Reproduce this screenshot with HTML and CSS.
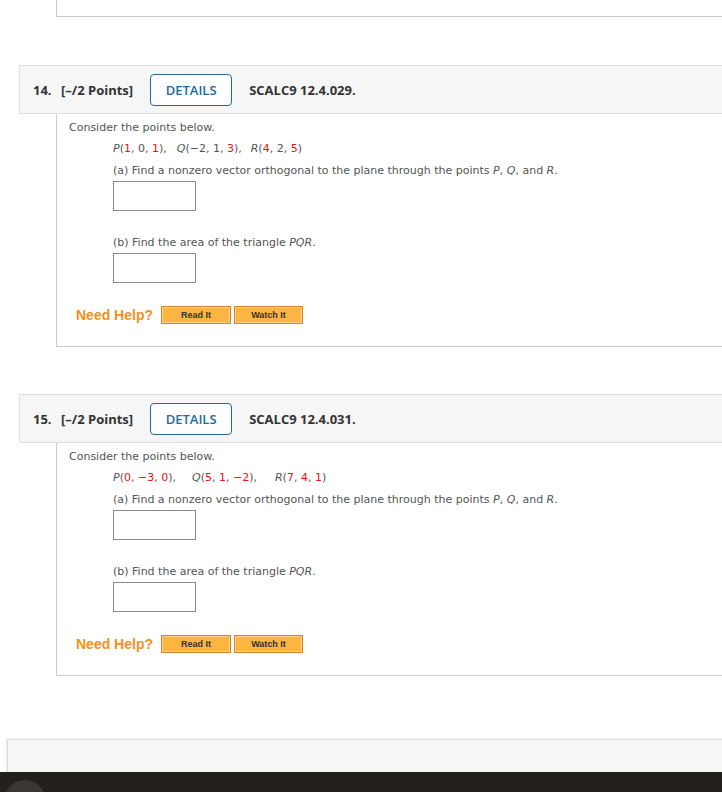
FILE: index.html
```html
<!DOCTYPE html>
<html>
<head>
<meta charset="utf-8">
<link rel="stylesheet" href="styles.css">
</head>
<body>
<div class="page">
  <div class="prev-body"></div>

  <div class="question">
    <div class="q-head">
      <span class="q-num">14.</span>
      <span class="q-points">[–/2 Points]</span>
      <span class="details-btn">DETAILS</span>
      <span class="q-ref">SCALC9 12.4.029.</span>
    </div>
    <div class="q-body">
      <p class="line">Consider the points below.</p>
      <p class="line indent"><span class="pt"><i>P</i>(<span class="red">1</span>, 0, <span class="red">1</span>),</span><span class="pt g1"><i>Q</i>(−2, 1, <span class="red">3</span>),</span><span class="pt g2"><i>R</i>(<span class="red">4</span>, 2, <span class="red">5</span>)</span></p>
      <p class="line indent part">(a) Find a nonzero vector orthogonal to the plane through the points <i>P</i>, <i>Q</i>, and <i>R</i>.</p>
      <div class="answer indent"></div>
      <p class="line indent part-b">(b) Find the area of the triangle <i>PQR</i>.</p>
      <div class="answer indent"></div>
      <div class="help-row">
        <span class="need-help">Need Help?</span>
        <span class="help-btn read">Read It</span>
        <span class="help-btn watch">Watch It</span>
      </div>
    </div>
  </div>

  <div class="question second">
    <div class="q-head">
      <span class="q-num">15.</span>
      <span class="q-points">[–/2 Points]</span>
      <span class="details-btn">DETAILS</span>
      <span class="q-ref">SCALC9 12.4.031.</span>
    </div>
    <div class="q-body">
      <p class="line">Consider the points below.</p>
      <p class="line indent"><span class="pt"><i>P</i>(<span class="red">0</span>, <span class="red">−3</span>, <span class="red">0</span>),</span><span class="pt g3"><i>Q</i>(<span class="red">5</span>, <span class="red">1</span>, <span class="red">−2</span>),</span><span class="pt g4"><i>R</i>(<span class="red">7</span>, <span class="red">4</span>, <span class="red">1</span>)</span></p>
      <p class="line indent part">(a) Find a nonzero vector orthogonal to the plane through the points <i>P</i>, <i>Q</i>, and <i>R</i>.</p>
      <div class="answer indent"></div>
      <p class="line indent part-b">(b) Find the area of the triangle <i>PQR</i>.</p>
      <div class="answer indent"></div>
      <div class="help-row">
        <span class="need-help">Need Help?</span>
        <span class="help-btn read">Read It</span>
        <span class="help-btn watch">Watch It</span>
      </div>
    </div>
  </div>

  <div class="next-head"></div>
</div>

<div class="footer-bar">
  <span class="footer-circle"></span>
</div>
</body>
</html>
```

FILE: styles.css
```css
html, body {
  margin: 0;
  padding: 0;
  overflow: hidden;
  background: #ffffff;
}

.page {
  width: 722px;
  height: 792px;
  overflow: hidden;
}

.prev-body {
  margin-left: 56px;
  margin-right: -20px;
  height: 17px;
  border-left: 1px solid #cccccc;
  border-bottom: 1px solid #cccccc;
  box-sizing: border-box;
}

.question {
  margin-top: 48px;
  margin-left: 19px;
  margin-right: -30px;
}

.question.second {
  margin-top: 47px;
}

.q-head {
  display: flex;
  align-items: center;
  height: 49px;
  box-sizing: border-box;
  background: #f6f6f6;
  border: 1px solid #dedede;
  padding-left: 13px;
  font-family: "Open Sans", "Liberation Sans", sans-serif;
  font-size: 13px;
  font-weight: 700;
  color: #333333;
}

.q-num {
  width: 28px;
}

.details-btn {
  display: flex;
  align-items: center;
  justify-content: center;
  box-sizing: border-box;
  width: 82px;
  height: 32px;
  margin-left: 17px;
  margin-right: 17px;
  border: 1px solid #1f6b9c;
  border-radius: 4px;
  background: #ffffff;
  color: #1d6a9c;
  font-weight: 600;
}

.q-body {
  margin-left: 37px;
  border-left: 1px solid #cccccc;
  border-bottom: 1px solid #cccccc;
  padding: 6px 0 21px 12px;
  font-family: "DejaVu Sans", Verdana, sans-serif;
  font-size: 11px;
  color: #555555;
}

.line {
  margin: 0;
  line-height: 16px;
}

.line + .line {
  margin-top: 5px;
}

.line.part {
  margin-top: 6px;
}

.indent {
  margin-left: 44px;
}

.pt {
  display: inline-block;
}

.g1 { margin-left: 10px; }
.g2 { margin-left: 9px; }
.g3 { margin-left: 16px; }
.g4 { margin-left: 18px; }

.red {
  color: #ee1111;
}

.answer {
  width: 83px;
  height: 30px;
  box-sizing: border-box;
  border: 1px solid #8a8a8a;
  background: #ffffff;
  margin-top: 2px;
}

.part-b {
  margin-top: 24px;
}

.help-row {
  display: flex;
  align-items: center;
  margin-top: 22px;
  margin-left: 7px;
  height: 20px;
}

.need-help {
  font-family: "Liberation Sans", Arial, sans-serif;
  font-weight: 700;
  font-size: 14px;
  color: #f5901e;
  margin-right: 8px;
}

.help-btn {
  display: flex;
  align-items: center;
  justify-content: center;
  box-sizing: border-box;
  height: 18px;
  border: 1px solid #d9822b;
  box-shadow: inset 0 0 0 1px #fdd18a;
  background: #fcb540;
  font-family: "Liberation Sans", Arial, sans-serif;
  font-weight: 700;
  font-size: 9px;
  color: #333333;
}

.help-btn.read {
  width: 70px;
}

.help-btn.watch {
  width: 69px;
  margin-left: 3px;
}

.next-head {
  margin-top: 63px;
  margin-left: 7px;
  margin-right: -20px;
  height: 60px;
  background: #f6f6f6;
  border: 1px solid #dddddd;
  box-shadow: -1px 0 2px rgba(0, 0, 0, 0.08);
}

.footer-bar {
  position: fixed;
  left: 0;
  right: 0;
  bottom: 0;
  height: 20px;
  background: #231f1a;
  overflow: hidden;
}

.footer-circle {
  position: absolute;
  left: 4px;
  top: 8px;
  width: 42px;
  height: 42px;
  border-radius: 50%;
  background: #3a3631;
}
```
